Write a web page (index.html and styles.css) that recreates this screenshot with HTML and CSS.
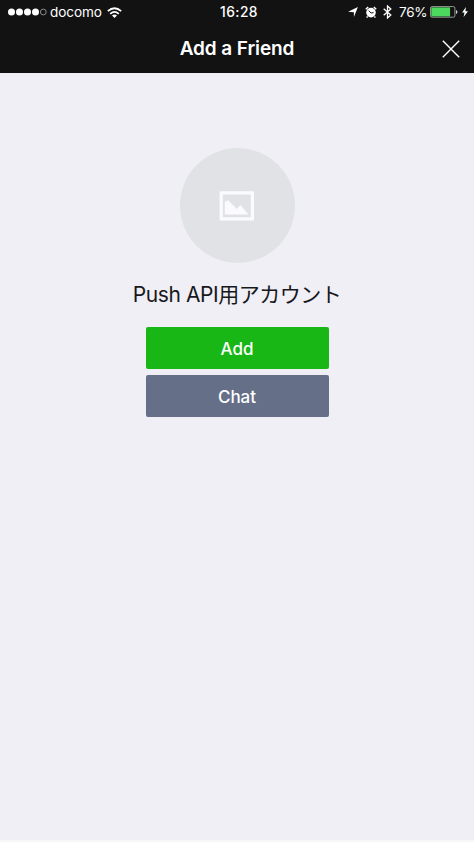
FILE: index.html
```html
<!DOCTYPE html>
<html lang="en">
<head>
<meta charset="utf-8">
<title>Add a Friend</title>
<link rel="stylesheet" href="styles.css">
</head>
<body>
<header class="top">
  <div class="status">
    <div class="carrier">
      <svg class="signal" width="40" height="10" viewBox="0 0 40 10"><g fill="#fff"><circle cx="3.5" cy="5" r="3.5"/><circle cx="11.5" cy="5" r="3.5"/><circle cx="19.5" cy="5" r="3.5"/><circle cx="27.5" cy="5" r="3.5"/></g><circle cx="35.3" cy="5" r="2.9" fill="none" stroke="#aaa" stroke-width=".8"/></svg>
      <span class="network">docomo</span>
      <svg class="wifi" width="15" height="11" viewBox="0 0 15 11"><g fill="none" stroke="#fff" stroke-width="1.8"><path d="M.8 4.1Q7.5-1.7 14.2 4.1"/><path d="M3.2 6.8Q7.5 3 11.8 6.8"/></g><path d="M5 8.6Q7.5 6.5 10 8.6L7.5 11z" fill="#fff"/></svg>
    </div>
    <time class="clock">16:28</time>
    <div class="indicators">
      <svg width="10" height="10" viewBox="0 0 10 10"><path d="M9.9.1 5.9 9.9V5.3L.1 4.8z" fill="#fff"/></svg>
      <svg class="alarm" width="12" height="12" viewBox="0 0 12 12"><circle cx="6" cy="6.6" r="4.8" fill="#fff"/><path d="M.8 3.2 3.2 1M8.8 1l2.4 2.2M2.6 10.5l-1 1M9.4 10.5l1 1" stroke="#fff" stroke-width="1.5"/><path d="M3.7 4.6 6 7l2.6-.4" fill="none" stroke="#121212" stroke-width="1"/></svg>
      <svg class="bluetooth" width="9" height="14" viewBox="0 0 9 14"><path d="M.7 3.8 7.8 10 4.5 13V1L7.8 4 .7 10.2" fill="none" stroke="#fff" stroke-width="1.3"/></svg>
      <span class="percent">76%</span>
      <svg class="battery" width="28" height="12" viewBox="0 0 28 12"><rect x=".5" y=".6" width="24.4" height="10.6" rx="1.5" fill="none" stroke="#b8b8b8" stroke-width=".8"/><path d="M1.3 1.4h18.8v9H1.3z" fill="#4cd75f"/><path d="M26 4q1.5.4 1.5 2T26 8z" fill="#ccc"/></svg>
      <svg class="bolt" width="6" height="10" viewBox="0 0 6 10"><path d="M4 0 .1 5.6h2.4L1.6 10 6 4.2H3.4z" fill="#fff"/></svg>
    </div>
  </div>
  <div class="nav">
    <h1 class="title">Add a Friend</h1>
    <button class="close" aria-label="Close"><svg width="18" height="18" viewBox="0 0 18 18"><path d="M.8.8l16.4 16.4M17.2.8.8 17.2" stroke="#fff" stroke-width="1.4"/></svg></button>
  </div>
</header>
<main class="profile">
  <div class="avatar">
    <svg width="36" height="30" viewBox="0 0 36 30"><path d="M2.2 1.8h31.2v26H2.2z" fill="none" stroke="#fbfbfd" stroke-width="3.2"/><path d="M5.8 23.4V11L9.2 9.2 17.8 18 21.3 14 29.2 23v.4z" fill="#fbfbfd"/></svg>
  </div>
  <h2 class="name">Push API<span class="name-kana" lang="ja">用アカウント</span></h2>
  <div class="actions">
    <button class="action add">Add</button>
    <button class="action chat">Chat</button>
  </div>
</main>
</body>
</html>
```
FILE: styles.css
```css
* { box-sizing: border-box; }
body {
  margin: 0;
  min-height: 842px;
  background: #efeff5;
  border-bottom: 2px solid #f7f7fa;
  font-family: Inter, "Noto Sans CJK JP", sans-serif;
}
svg { display: block; flex: none; }
button { border: 0; padding: 0; background: none; font: inherit; color: #fff; }
.top { height: 73px; background: #121212; color: #fff; }
.status {
  height: 24px;
  padding: 0 6px 0 8px;
  display: grid;
  grid-template-columns: 1fr auto 1fr;
  align-items: center;
  font-size: 13.5px;
  line-height: 24px;
}
.carrier, .indicators { display: flex; align-items: center; }
.indicators { justify-content: flex-end; }
.network { margin-left: 2px; width: 51px; font-size: 13.6px; letter-spacing: -.1px; }
.wifi { margin-left: 6px; }
.clock { position: relative; left: 1px; font-weight: 550; font-size: 13.8px; letter-spacing: .4px; }
.alarm { margin-left: 7px; }
.bluetooth { margin-left: 6px; }
.percent { margin-left: 7px; width: 28px; white-space: nowrap; letter-spacing: -.3px; }
.battery { margin-left: 3px; }
.bolt { margin-left: 4px; }
.nav {
  height: 49px;
  display: grid;
  grid-template-columns: 1fr auto 1fr;
  align-items: center;
}
.title { grid-column: 2; margin: 0; font-size: 19px; font-weight: 600; line-height: 48px; letter-spacing: -.1px; }
.close { justify-self: end; padding-right: 14px; }
.profile { padding-top: 75px; display: flex; flex-direction: column; align-items: center; }
.avatar {
  width: 115px;
  height: 115px;
  border-radius: 50%;
  background: #e1e2e6;
  display: grid;
  place-items: center;
}
.name { margin: 13px 0 0; height: 37px; line-height: 37px; font-size: 21px; font-weight: 400; letter-spacing: -.4px; color: #18181c; white-space: nowrap; }
.name-kana { letter-spacing: -.5px; }
.actions { margin-top: 14px; width: 183px; display: grid; gap: 6px; }
.action { height: 42px; padding-top: 1px; border-radius: 2px; font-size: 17px; font-weight: 550; }
.add { background: #19b715; }
.chat { background: #657088; }
```
